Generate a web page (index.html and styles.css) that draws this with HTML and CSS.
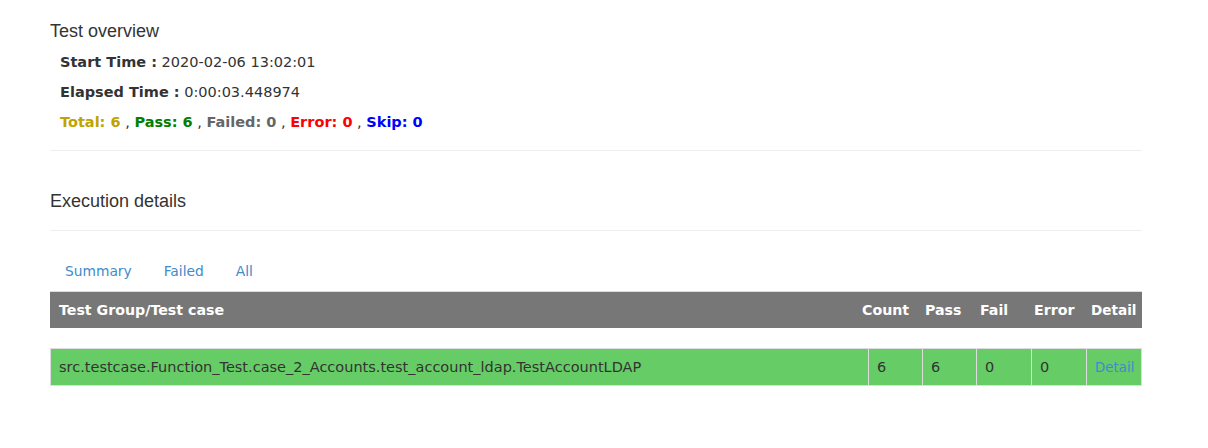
FILE: index.html
```html
<!DOCTYPE html>
<html>
<head>
<meta charset="utf-8">
<link rel="stylesheet" href="styles.css">
</head>
<body>
<div class="page">
  <h4 class="title">Test overview</h4>
  <div class="info">
    <p class="line"><strong>Start Time :</strong> 2020-02-06 13:02:01</p>
    <p class="line"><strong>Elapsed Time :</strong> 0:00:03.448974</p>
    <p class="line stats"><strong class="total">Total: 6</strong> , <strong class="pass">Pass: 6</strong> , <strong class="failed">Failed: 0</strong> , <strong class="error">Error: 0</strong> , <strong class="skip">Skip: 0</strong></p>
  </div>
  <hr class="rule rule-top">
  <h4 class="title exec">Execution details</h4>
  <hr class="rule">
  <ul class="pills">
    <li><a href="#">Summary</a></li>
    <li><a href="#">Failed</a></li>
    <li><a href="#">All</a></li>
  </ul>
  <div class="thead">
    <div class="th">Test Group/Test case</div>
    <div class="th">Count</div>
    <div class="th">Pass</div>
    <div class="th">Fail</div>
    <div class="th">Error</div>
    <div class="th">Detail</div>
  </div>
  <div class="trow">
    <div class="td">src.testcase.Function_Test.case_2_Accounts.test_account_ldap.TestAccountLDAP</div>
    <div class="td">6</div>
    <div class="td">6</div>
    <div class="td">0</div>
    <div class="td">0</div>
    <div class="td"><a href="#" class="detail">Detail</a></div>
  </div>
</div>
</body>
</html>
```
FILE: styles.css
```css
html, body {
  margin: 0;
  padding: 0;
  background: #fff;
}
body {
  font-family: "DejaVu Sans", Verdana, sans-serif;
  font-size: 14.5px;
  color: #333;
}
.page {
  width: 1092px;
  margin-left: 50px;
  padding-top: 20px;
}
.title {
  font-family: "Liberation Sans", Arial, sans-serif;
  font-weight: normal;
  font-size: 18px;
  line-height: 22px;
  margin: 0;
  color: #333;
}
.info {
  padding-left: 10px;
  padding-top: 5px;
}
.line {
  margin: 0;
  height: 30px;
  line-height: 30px;
}
.line strong {
  font-weight: bold;
}
.total { color: #bfa300; }
.pass { color: #008000; }
.failed { color: #666; }
.error { color: #ff0000; }
.skip { color: #0000ff; }
.rule {
  border: 0;
  border-top: 1px solid #eee;
  margin: 0;
  height: 0;
}
.rule-top {
  margin-top: 13px;
}
.exec {
  margin-top: 39px;
  margin-bottom: 18px;
}
.pills {
  list-style: none;
  margin: 20px 0 0 0;
  padding: 0;
  display: flex;
  height: 40px;
}
.pills li {
  margin-left: 2px;
}
.pills li:first-child {
  margin-left: 0;
}
.pills a {
  display: block;
  padding: 10px 15px;
  font-size: 13.8px;
  line-height: 20px;
  color: #428bca;
  text-decoration: none;
}
.thead {
  display: grid;
  grid-template-columns: 804px 63px 55px 54px 57px 59px;
  background: #777;
  border-top: 1px solid #ddd;
  height: 36px;
  align-items: center;
  font-size: 14.2px;
}
.th {
  color: #fff;
  font-weight: bold;
  padding-left: 8px;
  white-space: nowrap;
}
.th:first-child {
  padding-left: 9px;
}
.th:last-child {
  font-size: 13.6px;
}
.trow {
  display: grid;
  grid-template-columns: 817px 54px 54px 55px 55px 55px;
  background: #66cc66;
  border: 1px solid #ddd;
  margin-top: 20px;
  box-sizing: border-box;
  width: 1092px;
  height: 38px;
}
.td {
  padding-left: 8px;
  line-height: 36px;
  border-left: 1px solid #ddd;
  white-space: nowrap;
}
.td:first-child {
  border-left: 0;
}
.detail {
  color: #428bca;
  text-decoration: none;
  font-size: 13.4px;
}
```
